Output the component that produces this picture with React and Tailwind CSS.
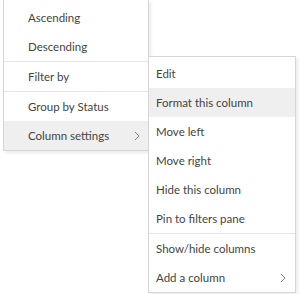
import React from "react";

function Chevron() {
  return (
    <svg width="6" height="10" viewBox="0 0 6 10" className="shrink-0">
      <path d="M1 1 L5 5 L1 9" fill="none" stroke="#8a8886" strokeWidth="1" />
    </svg>
  );
}

function Row({ label, active, chevron, pad }) {
  return (
    <div
      className={`h-[29px] flex items-center justify-between ${pad} ${
        active ? "bg-[#efefef]" : ""
      }`}
    >
      <span>{label}</span>
      {chevron && <Chevron />}
    </div>
  );
}

function Divider() {
  return <div className="h-px bg-[#e6e6e6]" />;
}

export default function App() {
  return (
    <div
      className="relative w-[300px] h-[294px] bg-white text-[11.5px] text-[#444444] overflow-hidden"
      style={{ fontFamily: 'Lato, "Open Sans", sans-serif' }}
    >
      <div className="ml-[3px] w-[146px] border border-t-0 border-[#d6d6d6] bg-white pt-[3px] shadow-[2px_2px_3px_rgba(0,0,0,0.08)]">
        <Row label="Ascending" pad="pl-[24px] pr-[8px]" />
        <Row label="Descending" pad="pl-[24px] pr-[8px]" />
        <Divider />
        <Row label="Filter by" pad="pl-[24px] pr-[8px]" />
        <Divider />
        <Row label="Group by Status" pad="pl-[24px] pr-[8px]" />
        <Row label="Column settings" pad="pl-[24px] pr-[8px]" active chevron />
      </div>

      <div className="absolute left-[148px] top-[56px] w-[148px] border border-[#d6d6d6] bg-white pt-[2px] shadow-[2px_2px_3px_rgba(0,0,0,0.08)]">
        <Row label="Edit" pad="pl-[7px] pr-[9px]" />
        <Row label="Format this column" pad="pl-[7px] pr-[9px]" active />
        <Row label="Move left" pad="pl-[7px] pr-[9px]" />
        <Row label="Move right" pad="pl-[7px] pr-[9px]" />
        <Row label="Hide this column" pad="pl-[7px] pr-[9px]" />
        <Row label="Pin to filters pane" pad="pl-[7px] pr-[9px]" />
        <Divider />
        <Row label="Show/hide columns" pad="pl-[7px] pr-[9px]" />
        <Row label="Add a column" pad="pl-[7px] pr-[9px]" chevron />
      </div>
    </div>
  );
}
